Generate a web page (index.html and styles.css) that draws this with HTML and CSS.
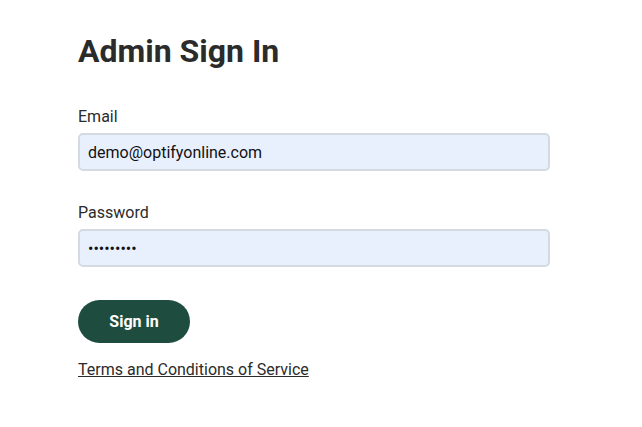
FILE: index.html
```html
<!DOCTYPE html>
<html lang="en">
<head>
<meta charset="utf-8">
<title>Admin Sign In</title>
<link rel="stylesheet" href="styles.css">
</head>
<body>
<main class="page">
  <h1 class="title">Admin Sign In</h1>
  <form class="form">
    <div class="field">
      <label class="label" for="email">Email</label>
      <input class="input" id="email" type="text" value="demo@optifyonline.com">
    </div>
    <div class="field">
      <label class="label" for="password">Password</label>
      <input class="input input-pw" id="password" type="password" value="demo12345">
    </div>
    <button class="btn" type="button">Sign in</button>
  </form>
  <a class="terms" href="#">Terms and Conditions of Service</a>
</main>
</body>
</html>
```

FILE: styles.css
```css
html, body {
  margin: 0;
  padding: 0;
  background: #ffffff;
}
body {
  font-family: Roboto, "Liberation Sans", sans-serif;
  color: #2b2b2b;
}
.page {
  width: 472px;
  padding: 31px 0 0 78px;
  display: flex;
  flex-direction: column;
  align-items: flex-start;
}
.title {
  margin: 0;
  font-size: 32px;
  font-weight: 700;
  line-height: 40px;
  color: #2b2b2b;
}
.form {
  margin-top: 35px;
  width: 100%;
  display: flex;
  flex-direction: column;
  align-items: flex-start;
}
.field {
  width: 100%;
  display: flex;
  flex-direction: column;
  margin-bottom: 31px;
}
.label {
  font-size: 16px;
  line-height: 22px;
  color: #2b2b2b;
  margin-bottom: 5px;
}
.input {
  box-sizing: border-box;
  width: 100%;
  height: 38px;
  padding: 0 8px;
  border: 2px solid #d5d9e0;
  border-radius: 5px;
  background: #e8f0fe;
  font-family: Roboto, "Liberation Sans", sans-serif;
  font-size: 16px;
  color: #111;
  outline: none;
}
.input-pw {
  font-size: 16px;
}
.btn {
  margin-top: 2px;
  width: 112px;
  height: 43px;
  border: none;
  border-radius: 22px;
  background: #1e4d3f;
  color: #ffffff;
  font-family: Roboto, "Liberation Sans", sans-serif;
  font-size: 16px;
  font-weight: 700;
  cursor: pointer;
}
.terms {
  margin-top: 16px;
  font-size: 16px;
  line-height: 22px;
  color: #2b2b2b;
  text-decoration: underline;
}
```
